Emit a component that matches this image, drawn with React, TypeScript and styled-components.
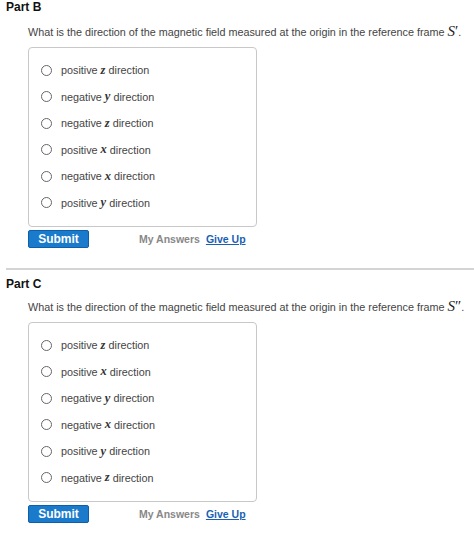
import React from 'react';
import styled, { createGlobalStyle } from 'styled-components';

const GlobalStyle = createGlobalStyle`
  *, *::before, *::after { box-sizing: border-box; }
  body {
    margin: 0;
    background: #ffffff;
    font-family: "Liberation Sans", Arial, sans-serif;
    color: #333333;
  }
`;

const Page = styled.div`
  width: 474px;
`;

const Part = styled.section`
  display: flex;
  flex-direction: column;
`;

const PartTitle = styled.h2`
  margin: 0;
  padding-left: 6px;
  font-size: 12px;
  font-weight: bold;
  color: #111;
  line-height: 14px;
`;

const Question = styled.p<{ $gap: number }>`
  margin: ${(p) => p.$gap}px 0 7px;
  padding-left: 28px;
  font-size: 10.8px;
  line-height: 16px;
  color: #444;
  white-space: nowrap;
`;

const Frame = styled.span`
  font-family: "Liberation Serif", "DejaVu Serif", serif;
  font-size: 15px;
  color: #222;
`;

const Box = styled.div`
  margin-left: 28px;
  width: 229px;
  border: 1px solid #c8c8c8;
  border-radius: 4px;
  padding: 9px 0 10px 12px;
  display: flex;
  flex-direction: column;
`;

const Option = styled.label`
  display: flex;
  align-items: center;
  height: 26.5px;
  font-size: 10.8px;
  color: #444;
`;

const Radio = styled.span`
  width: 11px;
  height: 11px;
  border: 1px solid #666;
  border-radius: 50%;
  margin-right: 9px;
  flex-shrink: 0;
`;

const MathVar = styled.i`
  font-family: "Liberation Serif", "DejaVu Serif", serif;
  font-size: 12.5px;
  font-weight: bold;
  font-style: italic;
  color: #333;
  margin: 0 3px;
`;

const Actions = styled.div`
  display: flex;
  align-items: center;
  margin-left: 28px;
  margin-top: 3px;
`;

const SubmitButton = styled.button`
  width: 61px;
  height: 18px;
  padding: 0;
  border: 1px solid #0f5fa8;
  border-radius: 2px;
  background: #1a7acb;
  color: #fff;
  font-family: "Liberation Sans", Arial, sans-serif;
  font-size: 12px;
  font-weight: bold;
`;

const MyAnswers = styled.span`
  margin-left: 50px;
  font-size: 10.5px;
  font-weight: bold;
  color: #888;
`;

const GiveUp = styled.a`
  margin-left: 6px;
  font-size: 10.5px;
  font-weight: bold;
  color: #1a5fb4;
  text-decoration: underline;
`;

const Divider = styled.hr`
  margin: 20px 0 7px 6px;
  border: none;
  border-top: 2px solid #d4d4d4;
`;

type Opt = { sign: string; axis: string };

const partB: Opt[] = [
  { sign: 'positive', axis: 'z' },
  { sign: 'negative', axis: 'y' },
  { sign: 'negative', axis: 'z' },
  { sign: 'positive', axis: 'x' },
  { sign: 'negative', axis: 'x' },
  { sign: 'positive', axis: 'y' },
];

const partC: Opt[] = [
  { sign: 'positive', axis: 'z' },
  { sign: 'positive', axis: 'x' },
  { sign: 'negative', axis: 'y' },
  { sign: 'negative', axis: 'x' },
  { sign: 'positive', axis: 'y' },
  { sign: 'negative', axis: 'z' },
];

const QuestionPart: React.FC<{ title: string; frame: string; options: Opt[]; gap: number }> = ({
  title,
  frame,
  options,
  gap,
}) => (
  <Part>
    <PartTitle>{title}</PartTitle>
    <Question $gap={gap}>
      What is the direction of the magnetic field measured at the origin in the reference frame{' '}
      <Frame>
        <i>S</i>
        {frame}
      </Frame>
      .
    </Question>
    <Box>
      {options.map((o, i) => (
        <Option key={i}>
          <Radio />
          {o.sign}
          <MathVar>{o.axis}</MathVar>
          direction
        </Option>
      ))}
    </Box>
    <Actions>
      <SubmitButton>Submit</SubmitButton>
      <MyAnswers>My Answers</MyAnswers>
      <GiveUp href="#">Give Up</GiveUp>
    </Actions>
  </Part>
);

export default function App() {
  return (
    <Page>
      <GlobalStyle />
      <QuestionPart title="Part B" frame="′" options={partB} gap={9} />
      <Divider />
      <QuestionPart title="Part C" frame="″" options={partC} gap={7} />
    </Page>
  );
}
